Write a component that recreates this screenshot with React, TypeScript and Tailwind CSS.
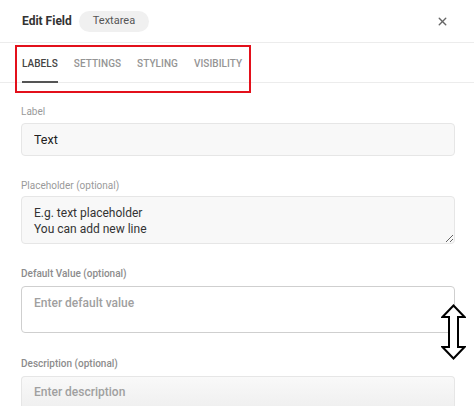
import React from 'react';
import { X } from 'lucide-react';

const TABS = ['LABELS', 'SETTINGS', 'STYLING', 'VISIBILITY'];

const FieldLabel = ({ children, className = '' }: { children: React.ReactNode; className?: string }) => (
  <label className={`block text-[10px] leading-[12px] font-medium text-[#8c8c8c] ${className}`}>{children}</label>
);

export default function App() {
  return (
    <div className="relative w-[474px] h-[406px] overflow-hidden bg-white font-['Roboto',sans-serif]">
      {/* Header */}
      <div className="h-[43px] flex items-center pl-[22px] pr-[25px] border-b border-[#ececec]">
        <span className="text-[12px] font-bold text-[#333]">Edit Field</span>
        <span className="ml-[7px] h-[21px] px-[14px] rounded-full bg-[#f0f0f0] text-[11px] text-[#555] flex items-center">
          Textarea
        </span>
        <button type="button" className="ml-auto text-[#666]">
          <X className="w-[13px] h-[13px] stroke-[2.6]" />
        </button>
      </div>

      {/* Tabs */}
      <div className="h-[40px] flex items-stretch gap-[16px] pl-[22px] border-b border-[#ececec]">
        {TABS.map((tab, i) => (
          <div
            key={tab}
            className={`relative flex items-center pt-[2px] text-[10px] font-medium tracking-[0.05px] ${
              i === 0 ? 'text-[#444]' : 'text-[#949494]'
            }`}
          >
            {tab}
            {i === 0 && <div className="absolute left-0 right-0 bottom-[-1px] h-[2px] bg-[#555]" />}
          </div>
        ))}
      </div>

      {/* Form */}
      <div className="pl-[21px] pr-[19px] pt-[23px] flex flex-col">
        <FieldLabel className="mb-[5px] font-normal text-[#9a9a9a]">Label</FieldLabel>
        <input
          readOnly
          value="Text"
          className="h-[33px] rounded-[4px] bg-[#f8f8f8] border border-[#e6e6e6] pl-[12px] text-[12.5px] text-[#222] outline-none"
        />

        <FieldLabel className="mt-[24px] mb-[4px] font-normal text-[#9a9a9a]">Placeholder (optional)</FieldLabel>
        <textarea
          readOnly
          value={'E.g. text placeholder\nYou can add new line'}
          className="h-[48px] rounded-[4px] bg-[#f8f8f8] border border-[#e6e6e6] pl-[12px] pt-[8px] text-[12px] leading-[16px] text-[#333] outline-none resize-y"
        />

        <FieldLabel className="mt-[24px] mb-[6px]">Default Value (optional)</FieldLabel>
        <textarea
          readOnly
          placeholder="Enter default value"
          className="h-[47px] rounded-[4px] bg-white border border-[#cfcfcf] pl-[12px] pt-[8px] text-[12px] leading-[16px] font-medium text-[#333] placeholder:text-[#a0a0a0] outline-none resize-none"
        />

        <FieldLabel className="mt-[25px] mb-[6px]">Description (optional)</FieldLabel>
        <div className="h-[40px] rounded-t-[4px] bg-gradient-to-b from-[#f9f9f9] to-[#ededed] border border-b-0 border-[#e6e6e6] pl-[12px] pt-[7px] text-[12px] leading-[16px] font-medium text-[#a0a0a0]">
          Enter description
        </div>
      </div>

      {/* Annotation box */}
      <div className="absolute left-[15px] top-[45px] w-[236px] h-[48px] border-2 border-[#e3101b] pointer-events-none" />

      {/* Resize cursor */}
      <svg className="absolute left-[441px] top-[304px]" width="25" height="56" viewBox="0 0 25 56">
        <polygon
          points="12.5,1.5 23.5,13 17,13 17,43 23.5,43 12.5,54.5 1.5,43 8,43 8,13 1.5,13"
          fill="white"
          stroke="black"
          strokeWidth="2"
          strokeLinejoin="miter"
        />
      </svg>
    </div>
  );
}
